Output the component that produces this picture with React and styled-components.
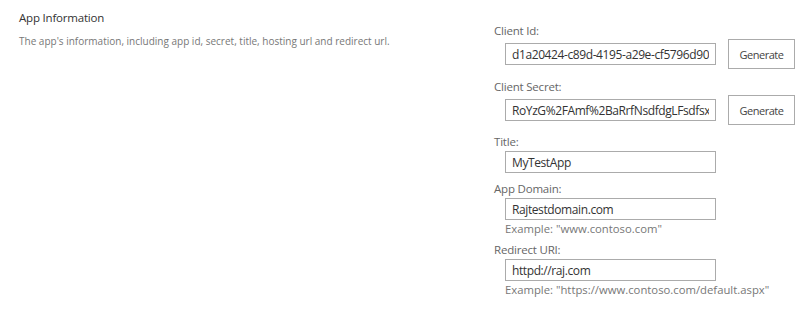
import React from 'react';
import styled, { createGlobalStyle } from 'styled-components'

const GlobalStyle = createGlobalStyle`
  html, body {
    margin: 0;
    padding: 0;
    background: #fff;
  }
  body {
    font-family: "Open Sans", "Noto Sans", sans-serif;
    color: #333;
  }
`

const Page = styled.div`
  display: grid;
  grid-template-columns: 475px 1fr;
  width: 808px;
  height: 312px;
  box-sizing: border-box;
  padding: 10px 0 0 19px;
`

const Section = styled.div`
  display: flex;
  flex-direction: column;
  gap: 9px;
`

const Heading = styled.div`
  font-size: 11.5px;
  letter-spacing: -0.2px;
  color: #333;
  line-height: 15px;
`

const Description = styled.div`
  font-size: 10px;
  color: #777;
  line-height: 14px;
`

const Fields = styled.div`
  display: flex;
  flex-direction: column;
  padding-top: 12px;
`

const Field = styled.div`
  display: flex;
  flex-direction: column;
  margin-bottom: ${p => p.$gap ?? 0}px;
`

const Label = styled.label`
  font-size: 11.5px;
  letter-spacing: -0.2px;
  color: #666;
  line-height: 17px;
  margin-bottom: ${p => p.$space ?? 1}px;
`

const Row = styled.div`
  display: flex;
  align-items: center;
  gap: 12px;
  padding-left: 11px;
`

const Input = styled.input`
  box-sizing: border-box;
  width: 211px;
  height: 22px;
  border: 1px solid #ababab;
  padding: 0 6px;
  font-family: inherit;
  font-size: 12px;
  letter-spacing: -0.4px;
  color: #333;
  outline: none;
  background: #fff;
`

const Button = styled.button`
  box-sizing: border-box;
  width: 67px;
  height: 30px;
  border: 1px solid #ababab;
  background: #fff;
  font-family: inherit;
  font-size: 11px;
  letter-spacing: -0.5px;
  color: #444;
  padding: 0;
`

const Hint = styled.div`
  font-size: 11.3px;
  color: #777;
  line-height: 15px;
  padding-left: 11px;
  margin-top: 1px;
`

export default function App() {
  return (
    <>
      <GlobalStyle />
      <Page>
        <Section>
          <Heading>App Information</Heading>
          <Description>The app's information, including app id, secret, title, hosting url and redirect url.</Description>
        </Section>
        <Fields>
          <Field $gap={9}>
            <Label $space={0}>Client Id:</Label>
            <Row>
              <Input readOnly value="d1a20424-c89d-4195-a29e-cf5796d90a7b" />
              <Button>Generate</Button>
            </Row>
          </Field>
          <Field $gap={8}>
            <Label $space={0}>Client Secret:</Label>
            <Row>
              <Input readOnly value="RoYzG%2FAmf%2BaRrfNsdfdgLFsdfsxwE" />
              <Button>Generate</Button>
            </Row>
          </Field>
          <Field $gap={7}>
            <Label>Title:</Label>
            <Row>
              <Input readOnly value="MyTestApp" />
            </Row>
          </Field>
          <Field $gap={5}>
            <Label>App Domain:</Label>
            <Row>
              <Input readOnly value="Rajtestdomain.com" />
            </Row>
            <Hint>Example: "www.contoso.com"</Hint>
          </Field>
          <Field>
            <Label>Redirect URI:</Label>
            <Row>
              <Input readOnly value="httpd://raj.com" />
            </Row>
            <Hint>Example: "https://www.contoso.com/default.aspx"</Hint>
          </Field>
        </Fields>
      </Page>
    </>
  )
}
